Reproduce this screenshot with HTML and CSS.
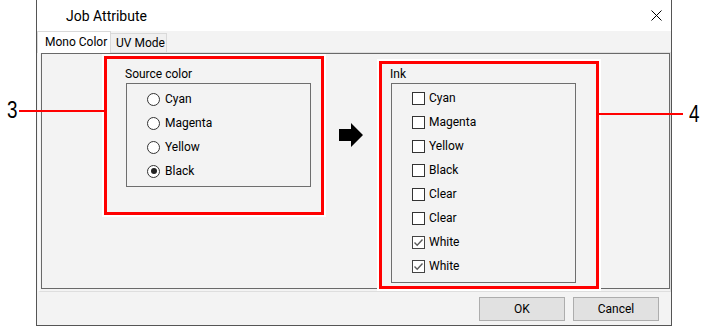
FILE: index.html
```html
<!DOCTYPE html>
<html>
<head>
<meta charset="utf-8">
<title>Job Attribute</title>
<link rel="stylesheet" href="styles.css">
</head>
<body>
<div class="dialog">
  <div class="titlebar">
    <span class="title">Job Attribute</span>
    <svg class="close" width="11" height="11" viewBox="0 0 11 11"><path d="M0.5 0.5 L10.5 10.5 M10.5 0.5 L0.5 10.5" stroke="#000" stroke-width="1" fill="none"/></svg>
  </div>
  <div class="tabs">
    <div class="tab active">Mono Color</div>
    <div class="tab">UV Mode</div>
  </div>
  <div class="page">
    <div class="page-inner">
      <div class="group source">
        <div class="group-label">Source color</div>
        <div class="group-box">
          <div class="row"><span class="radio"></span><span>Cyan</span></div>
          <div class="row"><span class="radio"></span><span>Magenta</span></div>
          <div class="row"><span class="radio"></span><span>Yellow</span></div>
          <div class="row"><span class="radio checked"></span><span>Black</span></div>
        </div>
      </div>
      <svg class="arrow" width="24" height="24" viewBox="0 0 24 24"><polygon points="0,6 12,6 12,0 24,12 12,24 12,18 0,18" fill="#000"/></svg>
      <div class="group ink">
        <div class="group-label">Ink</div>
        <div class="group-box">
          <div class="row"><span class="check"></span><span>Cyan</span></div>
          <div class="row"><span class="check"></span><span>Magenta</span></div>
          <div class="row"><span class="check"></span><span>Yellow</span></div>
          <div class="row"><span class="check"></span><span>Black</span></div>
          <div class="row"><span class="check"></span><span>Clear</span></div>
          <div class="row"><span class="check"></span><span>Clear</span></div>
          <div class="row"><span class="check checked"><svg width="11" height="11" viewBox="0 0 11 11"><path d="M1.5 5.5 L4.2 8.2 L9.5 2.5" stroke="#5c5c5c" stroke-width="1.4" fill="none"/></svg></span><span>White</span></div>
          <div class="row"><span class="check checked"><svg width="11" height="11" viewBox="0 0 11 11"><path d="M1.5 5.5 L4.2 8.2 L9.5 2.5" stroke="#5c5c5c" stroke-width="1.4" fill="none"/></svg></span><span>White</span></div>
        </div>
      </div>
    </div>
  </div>
  <div class="footer">
    <div class="btn">OK</div>
    <div class="btn">Cancel</div>
  </div>
</div>

<div class="callout-box box-3"></div>
<div class="callout-box box-4"></div>
<div class="callout-line line-3"></div>
<div class="callout-line line-4"></div>
<div class="callout-num num-3">3</div>
<div class="callout-num num-4">4</div>
</body>
</html>
```
FILE: styles.css
```css
html, body {
  margin: 0;
  padding: 0;
}
body {
  width: 709px;
  height: 326px;
  background: #fff;
  position: relative;
  overflow: hidden;
  font-family: Roboto, "Liberation Sans", sans-serif;
  font-size: 12px;
  color: #000;
}
.dialog {
  margin-left: 36px;
  width: 636px;
  height: 326px;
  box-sizing: border-box;
  border: 1px solid #555;
  border-top: none;
  background: #f3f3f3;
  display: flex;
  flex-direction: column;
}
.titlebar {
  height: 31px;
  background: #fff;
  display: flex;
  align-items: center;
  justify-content: space-between;
  padding-left: 29px;
  padding-right: 9px;
  flex: none;
}
.title {
  font-size: 14px;
  line-height: 16px;
  margin-top: 1px;
}
.close {
  display: block;
}
.tabs {
  height: 21px;
  display: flex;
  align-items: flex-end;
  flex: none;
  position: relative;
  z-index: 1;
}
.tab {
  box-sizing: border-box;
  height: 19px;
  border: 1px solid #d9d9d9;
  border-bottom: none;
  background: #f0f0f0;
  line-height: 18px;
  padding: 0 5px;
  white-space: nowrap;
}
.tab.active {
  height: 22px;
  width: 74px;
  background: #fff;
  margin-bottom: -1px;
  padding-left: 7px;
  line-height: 20px;
}
.tab + .tab {
  border-left: none;
  width: 56px;
  padding-left: 5px;
}
.page {
  margin-left: 1px;
  height: 240px;
  box-sizing: border-box;
  border: 1px solid #dedede;
  border-left: 2px solid #fafafa;
  padding: 0 0 2px 1px;
  flex: none;
}
.page-inner {
  box-sizing: border-box;
  height: 236px;
  border: 1px solid #696969;
  display: flex;
  align-items: flex-start;
}
.group {
  margin-top: 12px;
}
.group-label {
  line-height: 16px;
  height: 16px;
  margin-bottom: 1px;
  margin-left: -1px;
  white-space: nowrap;
}
.group-box {
  box-sizing: border-box;
  width: 185px;
  border: 1px solid #6e6e6e;
}
.source {
  margin-left: 84px;
}
.source .group-box {
  height: 104px;
  padding-top: 3px;
}
.arrow {
  display: block;
  margin-left: 28px;
  margin-top: 69px;
}
.ink {
  margin-left: 28px;
}
.ink .group-box {
  height: 200px;
  padding-top: 2px;
}
.row {
  height: 24px;
  display: flex;
  align-items: center;
  padding-left: 20px;
}
.radio {
  box-sizing: border-box;
  width: 13px;
  height: 13px;
  border: 1px solid #333;
  border-radius: 50%;
  background: #fff;
  margin-right: 5px;
  display: flex;
  align-items: center;
  justify-content: center;
  flex: none;
}
.radio.checked::after {
  content: "";
  width: 6px;
  height: 6px;
  border-radius: 50%;
  background: #222;
}
.check {
  box-sizing: border-box;
  width: 13px;
  height: 13px;
  border: 1px solid #333;
  background: #fff;
  margin-right: 4px;
  flex: none;
}
.check.checked {
  border-color: #444;
}
.check svg {
  display: block;
}
.footer {
  flex: 1;
  display: flex;
  justify-content: flex-end;
  align-items: flex-start;
  gap: 8px;
  padding-top: 5px;
  padding-right: 12px;
}
.btn {
  box-sizing: border-box;
  width: 86px;
  height: 24px;
  border: 1px solid #adadad;
  background: #e1e1e1;
  text-align: center;
  line-height: 22px;
}

/* annotation overlays */
.callout-box {
  position: absolute;
  box-sizing: border-box;
  border: 3px solid #ff0000;
  box-shadow: 0 0 0 2px #fff;
}
.box-3 {
  left: 104px;
  top: 56px;
  width: 220px;
  height: 159px;
}
.box-4 {
  left: 379px;
  top: 61px;
  width: 220px;
  height: 228px;
}
.callout-line {
  position: absolute;
  height: 2px;
  background: #ff0000;
}
.line-3 {
  left: 19px;
  top: 110px;
  width: 85px;
}
.line-4 {
  left: 599px;
  top: 113px;
  width: 84px;
}
.callout-num {
  position: absolute;
  font-family: "Liberation Sans", sans-serif;
  font-size: 23px;
  line-height: 24px;
  transform: scaleX(0.82);
  transform-origin: left center;
  color: #000;
}
.num-3 {
  left: 7px;
  top: 98px;
}
.num-4 {
  left: 689px;
  top: 102px;
}
```
